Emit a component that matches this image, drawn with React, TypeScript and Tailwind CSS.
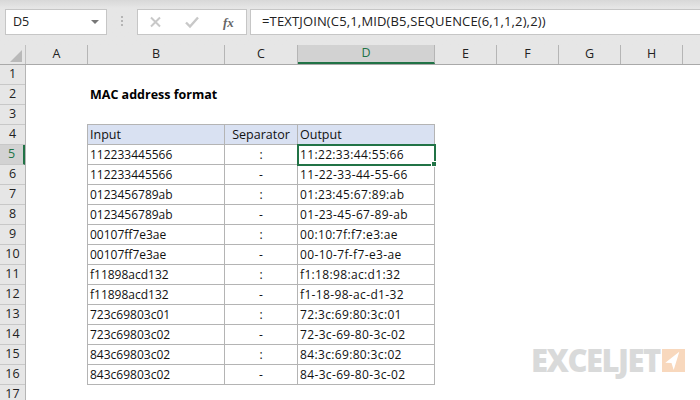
const columns = [
  { label: 'A', width: 'w-[62px]' },
  { label: 'B', width: 'w-[137px]' },
  { label: 'C', width: 'w-[73px]' },
  { label: 'D', width: 'w-[137px]' },
  { label: 'E', width: 'w-[62px]' },
  { label: 'F', width: 'w-[62px]' },
  { label: 'G', width: 'w-[62px]' },
  { label: 'H', width: 'w-[62px]' },
]

const rows = [
  ['112233445566', ':', '11:22:33:44:55:66'],
  ['112233445566', '-', '11-22-33-44-55-66'],
  ['0123456789ab', ':', '01:23:45:67:89:ab'],
  ['0123456789ab', '-', '01-23-45-67-89-ab'],
  ['00107ff7e3ae', ':', '00:10:7f:f7:e3:ae'],
  ['00107ff7e3ae', '-', '00-10-7f-f7-e3-ae'],
  ['f11898acd132', ':', 'f1:18:98:ac:d1:32'],
  ['f11898acd132', '-', 'f1-18-98-ac-d1-32'],
  ['723c69803c01', ':', '72:3c:69:80:3c:01'],
  ['723c69803c02', '-', '72-3c-69-80-3c-02'],
  ['843c69803c02', ':', '84:3c:69:80:3c:02'],
  ['843c69803c02', '-', '84-3c-69-80-3c-02'],
]

const rowNumbers = Array.from({ length: 17 }, (_, i) => i + 1)

function FormulaBar() {
  return (
    <div className="flex h-[45px] items-start bg-gradient-to-b from-[#d8d8d8] from-0% via-[#e6e6e6] via-[18%] to-[#e6e6e6] pt-[9px]">
      <div className="ml-[5px] flex h-[26px] w-[102px] items-center justify-between border border-[#c6c6c6] bg-white pl-[7px] pr-[7px] text-[12.5px] text-[#222]">
        D5
        <span className="h-0 w-0 border-x-[4px] border-t-[4px] border-x-transparent border-t-[#777]" />
      </div>
      <div className="ml-[14px] mt-[7px] flex w-[3px] flex-col gap-[2px]">
        <span className="h-[2px] w-[2px] bg-[#b5b5b5]" />
        <span className="h-[2px] w-[2px] bg-[#b5b5b5]" />
        <span className="h-[2px] w-[2px] bg-[#b5b5b5]" />
      </div>
      <div className="ml-[13px] flex h-[26px] w-[110px] items-center border border-[#c6c6c6] bg-white">
        <svg width="108" height="24" viewBox="0 0 108 24" fill="none">
          <path d="M13 7.5l9 9M22 7.5l-9 9" stroke="#c8c8c8" strokeWidth="2" />
          <path d="M48 12.5l4 4 8-9" stroke="#c8c8c8" strokeWidth="2.4" />
          <text x="85" y="17" fontFamily="'Liberation Serif', serif" fontStyle="italic" fontWeight="700" fontSize="13" fill="#666">fx</text>
        </svg>
      </div>
      <div className="ml-[3px] flex h-[26px] flex-1 items-center border-y border-l border-[#c6c6c6] bg-white pl-[11px] text-[13px] tracking-[0.15px] text-[#222]">
        =TEXTJOIN(C5,1,MID(B5,SEQUENCE(6,1,1,2),2))
      </div>
    </div>
  )
}

function ColumnHeaders() {
  return (
    <div className="flex h-[20px] border-b border-[#a9a9a9] bg-[#e6e6e6] text-[12.5px] text-[#222]">
      <div className="relative w-[26px] shrink-0 border-r border-[#c0c0c0]">
        <span className="absolute bottom-[2px] right-[3px] h-0 w-0 border-b-[12px] border-l-[12px] border-b-[#b9b9b9] border-l-transparent" />
      </div>
      {columns.map((col) => (
        <div
          key={col.label}
          className={`flex shrink-0 items-center justify-center border-r border-[#b5b5b5] ${col.width} ${
            col.label === 'D' ? 'border-b-2 border-b-[#217346] bg-[#d2d2d2] text-[#217346]' : ''
          }`}
        >
          {col.label}
        </div>
      ))}
    </div>
  )
}

function RowHeaders() {
  return (
    <div className="w-[26px] shrink-0 border-r border-[#b5b5b5] bg-[#e6e6e6] text-[12.5px] text-[#222]">
      {rowNumbers.map((n) => (
        <div
          key={n}
          className={`flex h-[20px] items-center justify-center border-b border-[#c8c8c8] ${
            n === 5 ? 'border-r-2 border-r-[#217346] bg-[#d2d2d2] text-[#217346]' : ''
          }`}
        >
          {n}
        </div>
      ))}
    </div>
  )
}

function DataTable() {
  return (
    <div className="relative ml-[61px] mt-[19px] w-[348px] border-l border-t border-[#b4b4b4] text-[12px] text-[#111]">
      <div className="grid h-[20px] grid-cols-[137px_73px_137px] bg-[#d9e1f2] text-[12.5px] leading-[19px]">
        <div className="border-b border-r border-[#b4b4b4] pl-[2px]">Input</div>
        <div className="border-b border-r border-[#b4b4b4] text-center">Separator</div>
        <div className="border-b border-r border-[#b4b4b4] pl-[2px]">Output</div>
      </div>
      {rows.map((row, i) => (
        <div key={i} className="grid h-[20px] grid-cols-[137px_73px_137px] leading-[19px]">
          <div className="border-b border-r border-[#b4b4b4] pl-[2px]">{row[0]}</div>
          <div className="border-b border-r border-[#b4b4b4] text-center">{row[1]}</div>
          <div className="border-b border-r border-[#b4b4b4] pl-[2px] tracking-[0.35px]">{row[2]}</div>
        </div>
      ))}
      {/* selected cell D5 */}
      <div className="absolute left-[209px] top-[19px] h-[22px] w-[139px] border-2 border-[#217346]">
        <span className="absolute -bottom-[3px] -right-[3px] h-[6px] w-[6px] border border-white bg-[#217346]" />
      </div>
    </div>
  )
}

export default function App() {
  return (
    <div className="relative h-[400px] w-[700px] overflow-hidden bg-white font-['Open_Sans',sans-serif]">
      <FormulaBar />
      <ColumnHeaders />
      <div className="flex">
        <RowHeaders />
        <div className="flex-1">
          <div className="ml-[64px] mt-[20px] h-[20px] text-[12.5px] font-bold leading-[20px] text-black">MAC address format</div>
          <DataTable />
        </div>
      </div>

      {/* watermark */}
      <div className="absolute left-[531px] top-[339px] flex items-start gap-[2px]">
        <span className="text-[31px] font-extrabold leading-[42px] tracking-[-1.5px] text-[#d9dada]">
          EXCELJET
        </span>
        <svg className="mt-[10px]" width="23" height="23" viewBox="0 0 23 23">
          <rect width="23" height="23" fill="#f8d8bd" />
          <path d="M3.3 13.7L17.3 2.7 11.7 21 9.5 14z" fill="#fff" />
        </svg>
      </div>
    </div>
  )
}
